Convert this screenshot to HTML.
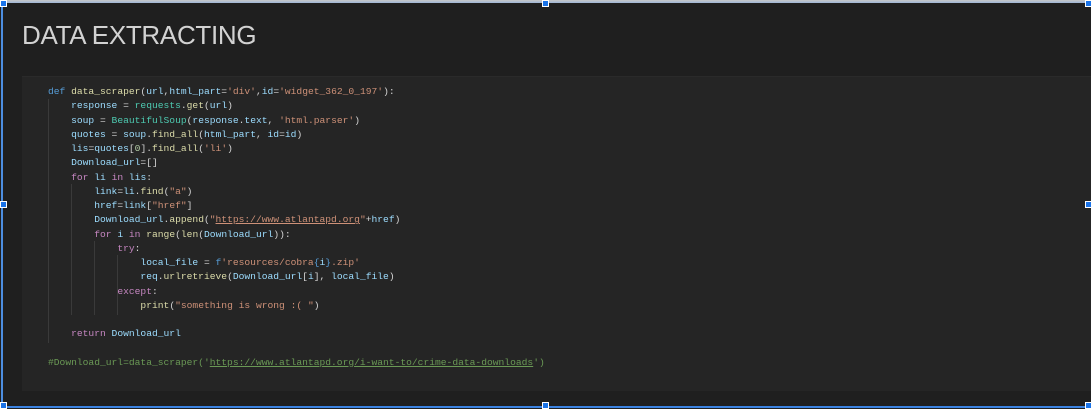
<!DOCTYPE html>
<html><head><meta charset="utf-8"><style>
html,body{margin:0;padding:0;}
body{width:1091px;height:409px;background:#1f1f1f;position:relative;overflow:hidden;font-family:"Liberation Sans",sans-serif;}
.top{position:absolute;left:0;top:0;width:1091px;height:3px;background:linear-gradient(#c8c8c8,#9fb6d6);}
.bl{position:absolute;background:#3b82e0;}
.h{position:absolute;width:5px;height:5px;background:#1a73e8;border:1px solid #fff;}
h1{position:absolute;left:22px;top:20px;margin:0;font-weight:normal;font-size:26px;color:#d2d2d2;letter-spacing:-0.3px;}
.code{position:absolute;left:22px;top:76px;width:1069px;height:314px;background:#252525;border-top:1px solid #2a2a2a;}
pre{position:absolute;left:48px;top:85px;margin:0;font-family:"Liberation Mono",monospace;font-size:9.65px;line-height:14.25px;color:#d4d4d4;}
.g{position:absolute;width:1px;background:#3a3a3a;}
.k{color:#569cd6}.f{color:#dcdcaa}.s{color:#ce9178}.v{color:#9cdcfe}.c{color:#c586c0}.t{color:#4ec9b0}.m{color:#6a9955}.n{color:#b5cea8}
.u{text-decoration:underline}
</style></head><body>
<div class="top"></div>
<div class="bl" style="left:1px;top:0;width:2px;height:409px;background:#4d8ee0"></div>
<div class="bl" style="left:0;top:406px;width:1091px;height:2px;"></div>
<h1>DATA EXTRACTING</h1>
<div class="code"></div>
<div class="g" style="left:48px;top:99px;height:244px"></div>
<div class="g" style="left:71px;top:184px;height:131px"></div>
<div class="g" style="left:94px;top:241px;height:74px"></div>
<div class="g" style="left:117px;top:255px;height:60px"></div>
<pre><span class="k">def</span> <span class="f">data_scraper</span>(<span class="v">url</span>,<span class="v">html_part</span>=<span class="s">'div'</span>,<span class="v">id</span>=<span class="s">'widget_362_0_197'</span>):
    <span class="v">response</span> = <span class="t">requests</span>.<span class="f">get</span>(<span class="v">url</span>)
    <span class="v">soup</span> = <span class="t">BeautifulSoup</span>(<span class="v">response</span>.<span class="v">text</span>, <span class="s">'html.parser'</span>)
    <span class="v">quotes</span> = <span class="v">soup</span>.<span class="f">find_all</span>(<span class="v">html_part</span>, <span class="v">id</span>=<span class="v">id</span>)
    <span class="v">lis</span>=<span class="v">quotes</span>[<span class="n">0</span>].<span class="f">find_all</span>(<span class="s">'li'</span>)
    <span class="v">Download_url</span>=[]
    <span class="c">for</span> <span class="v">li</span> <span class="c">in</span> <span class="v">lis</span>:
        <span class="v">link</span>=<span class="v">li</span>.<span class="f">find</span>(<span class="s">"a"</span>)
        <span class="v">href</span>=<span class="v">link</span>[<span class="s">"href"</span>]
        <span class="v">Download_url</span>.<span class="f">append</span>(<span class="s">"<span class="u">https://www.atlantapd.org</span>"</span>+<span class="v">href</span>)
        <span class="c">for</span> <span class="v">i</span> <span class="c">in</span> <span class="f">range</span>(<span class="f">len</span>(<span class="v">Download_url</span>)):
            <span class="c">try</span>:
                <span class="v">local_file</span> = <span class="k">f</span><span class="s">'resources/cobra</span><span class="k">{</span><span class="v">i</span><span class="k">}</span><span class="s">.zip'</span>
                <span class="v">req</span>.<span class="f">urlretrieve</span>(<span class="v">Download_url</span>[<span class="v">i</span>], <span class="v">local_file</span>)
            <span class="c">except</span>:
                <span class="f">print</span>(<span class="s">"something is wrong :( "</span>)

    <span class="c">return</span> <span class="v">Download_url</span>

<span class="m">#Download_url=data_scraper('<span class="u">https://www.atlantapd.org/i-want-to/crime-data-downloads</span>')</span></pre>
<div class="h" style="left:0;top:0"></div>
<div class="h" style="left:542px;top:0"></div>
<div class="h" style="left:1085px;top:0"></div>
<div class="h" style="left:0;top:201px"></div>
<div class="h" style="left:1085px;top:201px"></div>
<div class="h" style="left:0;top:402px"></div>
<div class="h" style="left:542px;top:402px"></div>
<div class="h" style="left:1085px;top:402px"></div>
</body></html>
